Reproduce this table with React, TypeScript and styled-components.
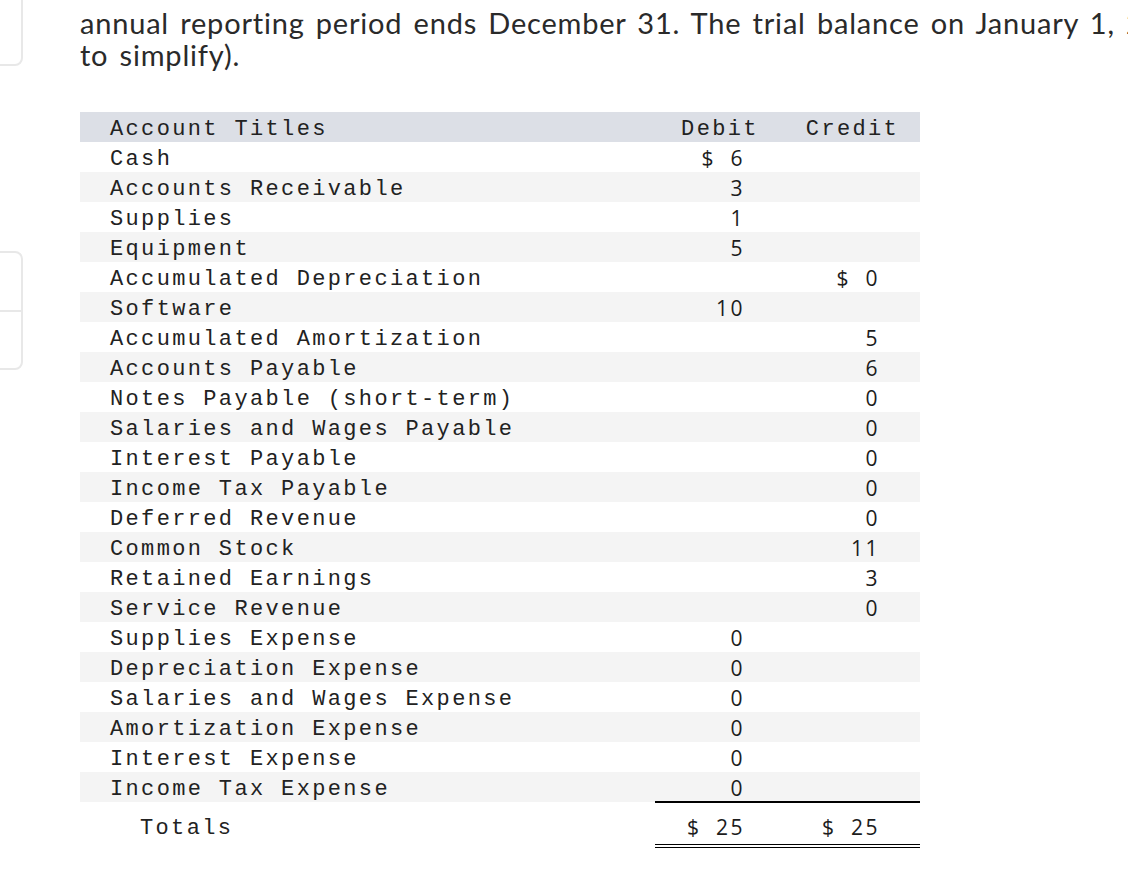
import React from 'react';
import styled, { createGlobalStyle } from 'styled-components';

const GlobalStyle = createGlobalStyle`
  html, body {
    margin: 0;
    padding: 0;
    background: #ffffff;
  }
  body {
    overflow: hidden;
  }
`;

const Page = styled.div`
  display: flex;
  align-items: flex-start;
  width: 1128px;
  height: 878px;
  overflow: hidden;
  background: #ffffff;
`;

const Sidebar = styled.aside`
  flex: 0 0 23px;
  display: flex;
  flex-direction: column;
`;

const SideCard = styled.div<{ $top: number; $height: number }>`
  margin-top: ${(p) => p.$top}px;
  margin-left: -60px;
  width: 83px;
  height: ${(p) => p.$height}px;
  box-sizing: border-box;
  border: 2px solid #e8e8e8;
  border-radius: 8px;
  display: flex;
  flex-direction: column;
`;

const CardSection = styled.div`
  flex: 1;
  & + & {
    border-top: 2px solid #e8e8e8;
  }
`;

const Main = styled.main`
  margin-left: 57px;
  flex: 1;
  min-width: 0;
  overflow: hidden;
`;

const Intro = styled.p`
  margin: 0;
  padding-top: 7px;
  font-family: Lato, "Open Sans", sans-serif;
  font-size: 29px;
  letter-spacing: 0.8px;
  word-spacing: 3px;
  line-height: 32px;
  color: #2a2a2a;
  white-space: nowrap;
`;

const Table = styled.table`
  margin-top: 41px;
  width: 840px;
  border-collapse: collapse;
  table-layout: fixed;
  font-family: "Liberation Mono", "DejaVu Sans Mono", monospace;
  color: #222222;
`;

const HeadRow = styled.tr`
  background: #dcdfe6;
`;

const HeadCell = styled.th<{ $align: 'left' | 'center' }>`
  height: 30px;
  box-sizing: border-box;
  padding: 6px 0 0 ${(p) => (p.$align === 'left' ? '30px' : '0')};
  line-height: 24px;
  font-size: 22px;
  letter-spacing: 2.35px;
  font-weight: 400;
  text-align: ${(p) => p.$align};
  vertical-align: top;
`;

const BodyRow = styled.tr<{ $shade: boolean }>`
  background: ${(p) => (p.$shade ? '#f4f4f4' : '#ffffff')};
`;

const LabelCell = styled.td<{ $indent?: boolean }>`
  height: 30px;
  box-sizing: border-box;
  padding: 6px 0 0 ${(p) => (p.$indent ? '60px' : '30px')};
  line-height: 24px;
  font-size: 22px;
  letter-spacing: 2.35px;
  white-space: nowrap;
  vertical-align: top;
`;

const NumCell = styled.td`
  height: 30px;
  box-sizing: border-box;
  padding: 4px 40px 0 0;
  line-height: 24px;
  font-family: "Open Sans", "Noto Sans", sans-serif;
  font-variant-numeric: tabular-nums;
  font-size: 21px;
  letter-spacing: 2.5px;
  color: #1c1c1c;
  text-align: right;
  white-space: pre;
  vertical-align: top;
`;

const TotalLabel = styled(LabelCell)`
  height: auto;
  padding-top: 15px;
  padding-bottom: 2px;
`;

const TotalCell = styled(NumCell)`
  height: auto;
  padding-top: 12px;
  padding-bottom: 5px;
  border-top: 2px solid #000000;
  border-bottom: 4px double #000000;
`;

type Row = { title: string; debit?: string; credit?: string };

const FS = '\u2007';

const rows: Row[] = [
  { title: 'Cash', debit: `$${FS}6` },
  { title: 'Accounts Receivable', debit: '3' },
  { title: 'Supplies', debit: '1' },
  { title: 'Equipment', debit: '5' },
  { title: 'Accumulated Depreciation', credit: `$${FS}0` },
  { title: 'Software', debit: '10' },
  { title: 'Accumulated Amortization', credit: '5' },
  { title: 'Accounts Payable', credit: '6' },
  { title: 'Notes Payable (short-term)', credit: '0' },
  { title: 'Salaries and Wages Payable', credit: '0' },
  { title: 'Interest Payable', credit: '0' },
  { title: 'Income Tax Payable', credit: '0' },
  { title: 'Deferred Revenue', credit: '0' },
  { title: 'Common Stock', credit: '11' },
  { title: 'Retained Earnings', credit: '3' },
  { title: 'Service Revenue', credit: '0' },
  { title: 'Supplies Expense', debit: '0' },
  { title: 'Depreciation Expense', debit: '0' },
  { title: 'Salaries and Wages Expense', debit: '0' },
  { title: 'Amortization Expense', debit: '0' },
  { title: 'Interest Expense', debit: '0' },
  { title: 'Income Tax Expense', debit: '0' },
];

export default function App() {
  return (
    <>
      <GlobalStyle />
      <Page>
        <Sidebar>
          <SideCard $top={-40} $height={106}>
            <CardSection />
          </SideCard>
          <SideCard $top={185} $height={119}>
            <CardSection />
            <CardSection />
          </SideCard>
        </Sidebar>
        <Main>
          <Intro>
            annual reporting period ends December 31. The trial balance on January 1, 2022,
            <br />
            to simplify).
          </Intro>
          <Table>
            <colgroup>
              <col style={{ width: 575 }} />
              <col style={{ width: 130 }} />
              <col style={{ width: 135 }} />
            </colgroup>
            <thead>
              <HeadRow>
                <HeadCell $align="left">Account Titles</HeadCell>
                <HeadCell $align="center">Debit</HeadCell>
                <HeadCell $align="center">Credit</HeadCell>
              </HeadRow>
            </thead>
            <tbody>
              {rows.map((r, i) => (
                <BodyRow key={r.title} $shade={i % 2 === 1}>
                  <LabelCell>{r.title}</LabelCell>
                  <NumCell>{r.debit ?? ''}</NumCell>
                  <NumCell>{r.credit ?? ''}</NumCell>
                </BodyRow>
              ))}
              <BodyRow $shade={false}>
                <TotalLabel $indent>Totals</TotalLabel>
                <TotalCell>{`$${FS}25`}</TotalCell>
                <TotalCell>{`$${FS}25`}</TotalCell>
              </BodyRow>
            </tbody>
          </Table>
        </Main>
      </Page>
    </>
  );
}
